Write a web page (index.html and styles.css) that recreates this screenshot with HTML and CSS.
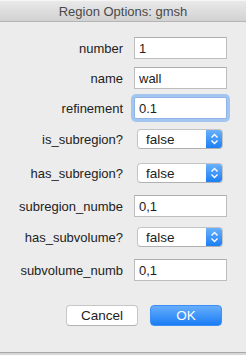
FILE: index.html
```html
<!DOCTYPE html>
<html lang="en">
<head>
  <meta charset="UTF-8">
  <meta name="viewport" content="width=device-width, initial-scale=1.0">
  <title>Region Options: gmsh</title>
  <link rel="stylesheet" href="styles.css">
</head>
<body>
  <div class="window">
    <div class="titlebar">Region Options: gmsh</div>
    <div class="form">
      <div class="row">
        <label for="number">number</label>
        <input type="text" id="number" value="1" />
      </div>
      <div class="row">
        <label for="name">name</label>
        <input type="text" id="name" value="wall" />
      </div>
      <div class="row">
        <label for="refinement">refinement</label>
        <input type="text" id="refinement" class="focused" value="0.1" />
      </div>
      <div class="row sel">
        <label>is_subregion?</label>
        <div class="select"><span>false</span><span class="arrows"><svg width="9" height="12" viewBox="0 0 9 12"><path d="M1.5 4.5 L4.5 1.5 L7.5 4.5 M1.5 7.5 L4.5 10.5 L7.5 7.5" fill="none" stroke="#fff" stroke-width="1.4"/></svg></span></div>
      </div>
      <div class="row sel">
        <label>has_subregion?</label>
        <div class="select"><span>false</span><span class="arrows"><svg width="9" height="12" viewBox="0 0 9 12"><path d="M1.5 4.5 L4.5 1.5 L7.5 4.5 M1.5 7.5 L4.5 10.5 L7.5 7.5" fill="none" stroke="#fff" stroke-width="1.4"/></svg></span></div>
      </div>
      <div class="row">
        <label for="subregion">subregion_numbe</label>
        <input type="text" id="subregion" value="0,1" />
      </div>
      <div class="row sel">
        <label>has_subvolume?</label>
        <div class="select"><span>false</span><span class="arrows"><svg width="9" height="12" viewBox="0 0 9 12"><path d="M1.5 4.5 L4.5 1.5 L7.5 4.5 M1.5 7.5 L4.5 10.5 L7.5 7.5" fill="none" stroke="#fff" stroke-width="1.4"/></svg></span></div>
      </div>
      <div class="row">
        <label for="subvolume">subvolume_numb</label>
        <input type="text" id="subvolume" value="0,1" />
      </div>
      <div class="buttons">
        <button class="cancel">Cancel</button>
        <button class="ok">OK</button>
      </div>
    </div>
  </div>
</body>
</html>
```

FILE: styles.css
```css
body {
  margin: 0;
  font-family: "Liberation Sans", Arial, sans-serif;
  font-size: 13px;
  color: #222;
  background: #d6d6d6;
}
.window {
  width: 246px;
  height: 353px;
  background: #ececec;
  border-bottom: 1px solid #a8a8a8;
  box-sizing: border-box;
}
.titlebar {
  height: 22px;
  box-sizing: border-box;
  line-height: 21px;
  text-align: center;
  color: #4a4a4a;
  background: linear-gradient(#e9e9e9, #d2d2d2);
  border-top: 1px solid #f6f6f6;
  border-bottom: 1px solid #b4b4b4;
}
.form {
  display: flex;
  flex-direction: column;
  gap: 8px;
  padding-top: 15px;
}
.row {
  display: flex;
  align-items: center;
  height: 22px;
}
.row.sel {
  height: 26px;
  align-items: flex-start;
}
label {
  width: 134px;
  flex-shrink: 0;
  text-align: right;
  padding-right: 11px;
  box-sizing: border-box;
}
.row.sel label {
  padding-top: 5px;
}
input {
  width: 93px;
  height: 22px;
  box-sizing: border-box;
  margin: 0;
  padding: 0 4px;
  border: 1px solid #bdbdbd;
  border-top-color: #aeaeae;
  background: #fff;
  font: inherit;
  color: #222;
  outline: none;
}
input.focused {
  border-color: #8fb5e6;
  border-radius: 2px;
  box-shadow: 0 0 0 3px #a3c6f1;
}
.select {
  display: flex;
  align-items: center;
  justify-content: space-between;
  margin: 2px 0 0 3px;
  width: 86px;
  height: 20px;
  box-sizing: border-box;
  border: 1px solid #c4c4c4;
  border-bottom-color: #b0b0b0;
  border-radius: 4px;
  background: #fff;
  overflow: hidden;
  font-size: 13.5px;
}
.select span:first-child {
  padding-left: 8px;
}
.arrows {
  width: 16px;
  height: 100%;
  display: flex;
  align-items: center;
  justify-content: center;
  background: linear-gradient(#69b1fb, #1b7ff6);
}
.buttons {
  display: flex;
  gap: 12px;
  margin-top: 16px;
  padding-left: 66px;
}
button {
  width: 72px;
  height: 21px;
  padding: 0;
  border-radius: 4px;
  font: inherit;
  font-size: 13.5px;
  cursor: pointer;
}
.cancel {
  background: #fff;
  color: #222;
  border: 1px solid #c6c6c6;
  border-bottom-color: #b3b3b3;
}
.ok {
  background: linear-gradient(#66aefb, #1a7df6);
  color: #fff;
  border: 1px solid #3d8ef5;
}
```
